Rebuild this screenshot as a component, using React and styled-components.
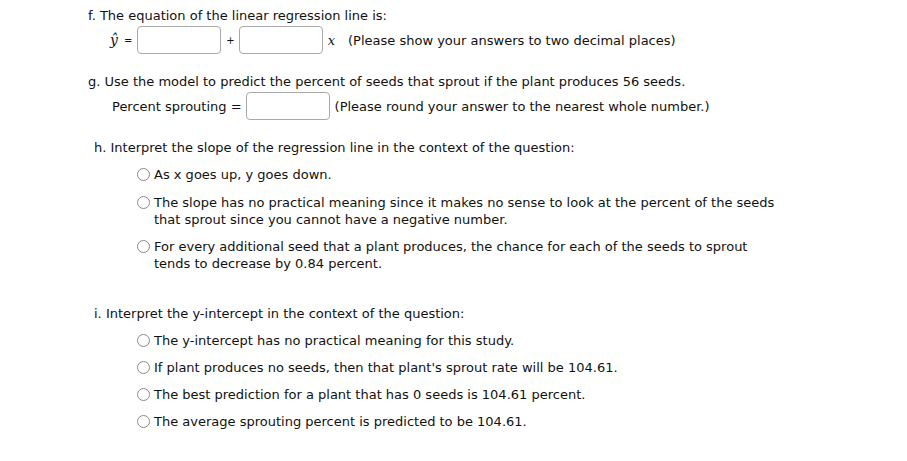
import React from 'react'
import styled, { createGlobalStyle } from 'styled-components'

const GlobalStyle = createGlobalStyle`
  body {
    margin: 0;
    background: #ffffff;
    color: #111111;
    font-family: 'DejaVu Sans', Verdana, sans-serif;
    font-size: 13px;
  }
`

const Page = styled.div`
  width: 907px;
  height: 461px;
  padding: 8px 0 0 88px;
  box-sizing: border-box;
`

const Part = styled.div`
  margin-top: ${({ gap }) => gap || 0}px;
  padding-left: ${({ indent }) => indent || 0}px;
`

const Prompt = styled.div`
  line-height: 16px;
`

const AnswerRow = styled.div`
  display: flex;
  align-items: center;
  margin-top: 2px;
  padding-left: ${({ indent }) => indent || 0}px;
  height: 28px;
`

const Hat = styled.span`
  font-family: 'DejaVu Serif', 'Liberation Serif', serif;
  font-style: italic;
  font-size: 14px;
  margin-right: 6px;
`

const Small = styled.span`
  font-size: 10px;
  margin: 0 ${({ space }) => space || 5}px 0 ${({ left }) => left || 0}px;
`

const Box = styled.input`
  width: 84px;
  height: 28px;
  box-sizing: border-box;
  border: 1px solid #a9a9a9;
  border-radius: 4px;
  background: #fff;
  margin: 0 0 0 ${({ left }) => left || 0}px;
  padding: 0 4px;
  outline: none;
`

const MathX = styled.span`
  font-family: 'DejaVu Serif', 'Liberation Serif', serif;
  font-style: italic;
  font-size: 13px;
  margin: 0 13px 0 5px;
`

const Note = styled.span`
  margin-left: ${({ left }) => left || 0}px;
`

const Options = styled.div`
  padding-left: 43px;
  display: flex;
  flex-direction: column;
  gap: ${({ gap }) => gap || 10}px;
  margin-top: 10px;
`

const Option = styled.label`
  display: flex;
  align-items: flex-start;
  line-height: 17px;
  width: 640px;
`

const Radio = styled.span`
  flex: none;
  width: 11px;
  height: 11px;
  border: 1px solid #8a8a8a;
  border-radius: 50%;
  margin: 2px 4px 0 0;
  background: #fff;
`

export default function App() {
  return (
    <>
      <GlobalStyle />
      <Page>
        <Part>
          <Prompt>f. The equation of the linear regression line is:</Prompt>
          <AnswerRow indent={22}>
            <Hat>ŷ</Hat>
            <Small>=</Small>
            <Box />
            <Small left={5} space={4}>+</Small>
            <Box />
            <MathX>x</MathX>
            <Note>(Please show your answers to two decimal places)</Note>
          </AnswerRow>
        </Part>

        <Part gap={20}>
          <Prompt>g. Use the model to predict the percent of seeds that sprout if the plant produces 56 seeds.</Prompt>
          <AnswerRow indent={24}>
            <Note>Percent sprouting =</Note>
            <Box left={4} />
            <Note left={5}>(Please round your answer to the nearest whole number.)</Note>
          </AnswerRow>
        </Part>

        <Part gap={20} indent={6}>
          <Prompt>h. Interpret the slope of the regression line in the context of the question:</Prompt>
          <Options gap={10.5}>
            <Option>
              <Radio />
              <span>As x goes up, y goes down.</span>
            </Option>
            <Option>
              <Radio />
              <span>The slope has no practical meaning since it makes no sense to look at the percent of the seeds that sprout since you cannot have a negative number.</span>
            </Option>
            <Option>
              <Radio />
              <span>For every additional seed that a plant produces, the chance for each of the seeds to sprout tends to decrease by 0.84 percent.</span>
            </Option>
          </Options>
        </Part>

        <Part gap={34} indent={6}>
          <Prompt>i. Interpret the y-intercept in the context of the question:</Prompt>
          <Options gap={10}>
            <Option>
              <Radio />
              <span>The y-intercept has no practical meaning for this study.</span>
            </Option>
            <Option>
              <Radio />
              <span>If plant produces no seeds, then that plant's sprout rate will be 104.61.</span>
            </Option>
            <Option>
              <Radio />
              <span>The best prediction for a plant that has 0 seeds is 104.61 percent.</span>
            </Option>
            <Option>
              <Radio />
              <span>The average sprouting percent is predicted to be 104.61.</span>
            </Option>
          </Options>
        </Part>
      </Page>
    </>
  )
}
